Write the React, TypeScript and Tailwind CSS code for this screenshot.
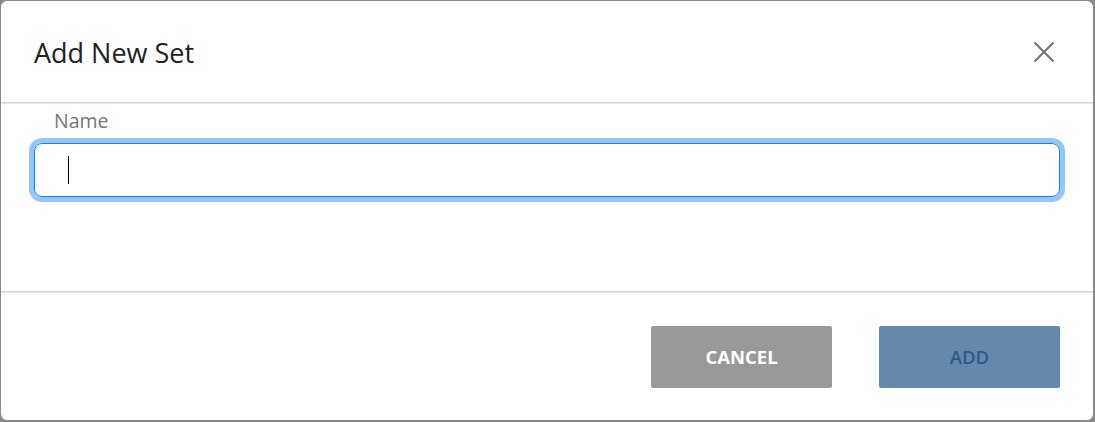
export default function App() {
  return (
    <div className="w-[1095px] h-[422px] bg-[#8a8a8a] pt-px pl-px" style={{ fontFamily: '"Open Sans", "Noto Sans", sans-serif' }}>
      <div className="w-[1092px] h-[419px] bg-white rounded-[6px] flex flex-col overflow-hidden">
        {/* header */}
        <div className="h-[101px] flex items-center justify-between pl-[33px] pr-[38px] pt-px">
          <h2 className="text-[27px] leading-none text-[#222] font-normal">Add New Set</h2>
          <button className="w-[22px] h-[22px] flex items-center justify-center text-[#777]">
            <svg width="22" height="22" viewBox="0 0 22 22" fill="none" stroke="currentColor" strokeWidth="2.2">
              <path d="M1.5 1.5 L20.5 20.5 M20.5 1.5 L1.5 20.5" />
            </svg>
          </button>
        </div>
        <div className="h-px bg-[#d4d4d4]" />
        <div className="h-px bg-[#e8e8e8]" />

        {/* body */}
        <div className="flex-1 px-[33px] pt-[3px]">
          <label className="block pl-[20px] text-[19.5px] leading-[27px] text-[#777]">Name</label>
          <div className="mt-[9px] h-[54px] rounded-[8px] border border-[#1a7cff] ring-[5px] ring-[#93c6ff] flex items-center pl-[33px]">
            <div className="w-px h-[28px] bg-black" />
          </div>
        </div>

        <div className="h-px bg-[#d4d4d4]" />
        <div className="h-px bg-[#e8e8e8]" />

        {/* footer */}
        <div className="h-[127px] flex justify-end gap-[47px] pr-[33px] pt-[33px]">
          <button className="w-[181px] h-[62px] rounded-[2px] bg-[#999] text-white text-[18.5px] font-bold">
            CANCEL
          </button>
          <button className="w-[181px] h-[62px] rounded-[2px] bg-[#6589ab] text-[#2c5b8a] text-[18.5px] font-semibold">
            ADD
          </button>
        </div>
      </div>
    </div>
  );
}
